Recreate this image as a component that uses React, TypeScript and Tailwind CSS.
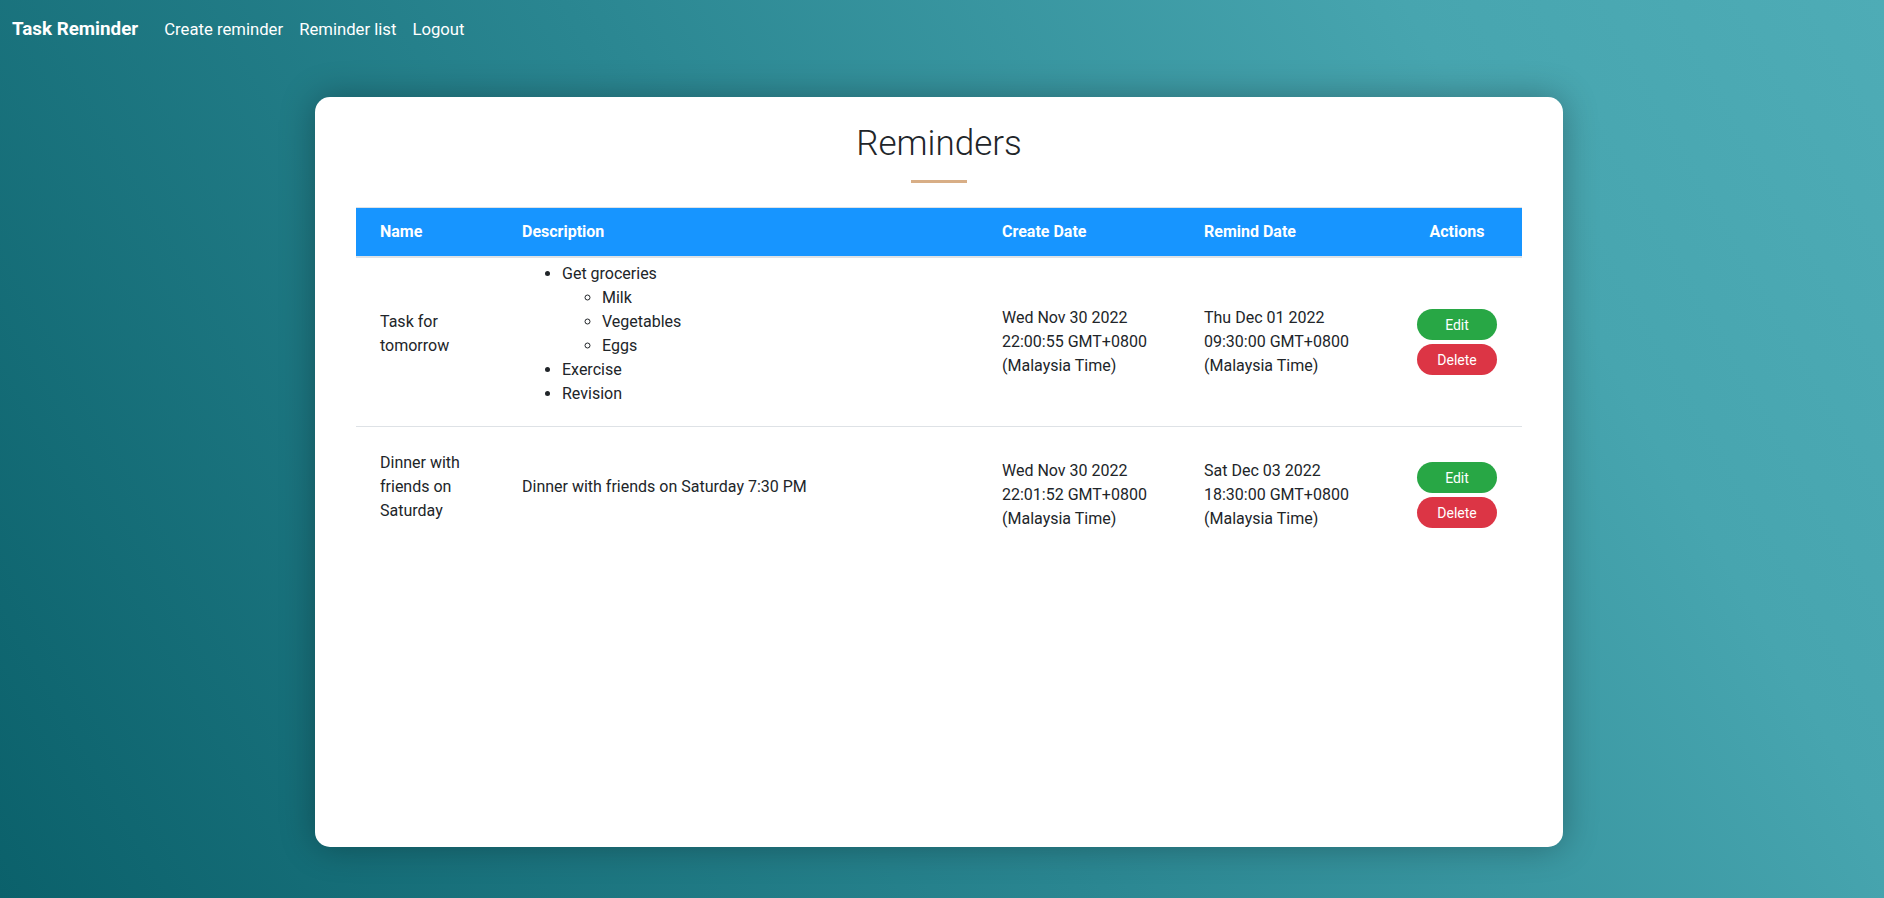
import React from "react";

type Reminder = {
  name: string;
  description: React.ReactNode;
  created: string;
  remind: string;
};

const reminders: Reminder[] = [
  {
    name: "Task for tomorrow",
    description: (
      <ul className="list-disc pl-10 mb-4">
        <li>Get groceries</li>
        <ul className="list-[circle] pl-10">
          <li>Milk</li>
          <li>Vegetables</li>
          <li>Eggs</li>
        </ul>
        <li>Exercise</li>
        <li>Revision</li>
      </ul>
    ),
    created: "Wed Nov 30 2022 22:00:55 GMT+0800 (Malaysia Time)",
    remind: "Thu Dec 01 2022 09:30:00 GMT+0800 (Malaysia Time)",
  },
  {
    name: "Dinner with friends on Saturday",
    description: <p className="mb-4">Dinner with friends on Saturday 7:30 PM</p>,
    created: "Wed Nov 30 2022 22:01:52 GMT+0800 (Malaysia Time)",
    remind: "Sat Dec 03 2022 18:30:00 GMT+0800 (Malaysia Time)",
  },
];

function Navbar() {
  return (
    <nav className="flex items-baseline h-[56px] pt-[14px] px-3 text-white">
      <a href="#" className="text-[18.8px] leading-[30px] font-bold mr-[18px]">
        Task Reminder
      </a>
      <a href="#" className="px-2 text-[16.7px] leading-[25px]">
        Create reminder
      </a>
      <a href="#" className="px-2 text-[16.7px] leading-[25px]">
        Reminder list
      </a>
      <a href="#" className="px-2 text-[16.7px] leading-[25px]">
        Logout
      </a>
    </nav>
  );
}

export default function App() {
  return (
    <div
      className="min-h-screen bg-[linear-gradient(60deg,#0b616b_0%,#2a8691_45%,#47a5af_80%,#4eacb6_100%)] font-['Roboto','Liberation_Sans',sans-serif] text-[16px] leading-6 text-[#212529]"
    >
      <Navbar />
      <div className="ml-[315px] mt-[41px] w-[1248px] h-[750px] bg-white rounded-[15px] shadow-[0_0_35px_rgba(0,0,0,0.3)] px-[41px] pt-[26px]">
        <h1 className="text-center text-[35px] leading-[42px] font-light text-[#212529]">
          Reminders
        </h1>
        <div className="mx-auto mt-[15px] w-[56px] h-[3px] bg-[#d8ae86]" />

        <table className="mt-[24px] w-full table-fixed border-collapse">
          <colgroup>
            <col className="w-[142px]" />
            <col className="w-[480px]" />
            <col className="w-[202px]" />
            <col className="w-[212px]" />
            <col className="w-[130px]" />
          </colgroup>
          <thead>
            <tr className="bg-[#1795ff] text-white border-t border-[#dee2e6] border-b-2 border-b-[#dee2e6]">
              <th className="text-left font-bold px-6 py-3">Name</th>
              <th className="text-left font-bold px-6 py-3">Description</th>
              <th className="text-left font-bold px-6 py-3">Create Date</th>
              <th className="text-left font-bold px-6 py-3">Remind Date</th>
              <th className="text-center font-bold px-6 py-3">Actions</th>
            </tr>
          </thead>
          <tbody>
            {reminders.map((r, i) => (
              <tr
                key={i}
                className={
                  i < reminders.length - 1 ? "border-b border-[#dee2e6]" : ""
                }
              >
                <td className="align-middle px-6 py-6">
                  <p className="mb-4">{r.name}</p>
                </td>
                <td className="align-middle px-6 py-1">{r.description}</td>
                <td className="align-middle px-6 py-6">{r.created}</td>
                <td className="align-middle px-6 py-6">{r.remind}</td>
                <td className="align-middle px-6 py-6">
                  <div className="flex flex-col items-center gap-1">
                    <button className="w-[80px] h-[31px] rounded-full bg-[#28a745] text-white text-[14px]">
                      Edit
                    </button>
                    <button className="w-[80px] h-[31px] rounded-full bg-[#dc3545] text-white text-[14px]">
                      Delete
                    </button>
                  </div>
                </td>
              </tr>
            ))}
          </tbody>
        </table>
      </div>
    </div>
  );
}
